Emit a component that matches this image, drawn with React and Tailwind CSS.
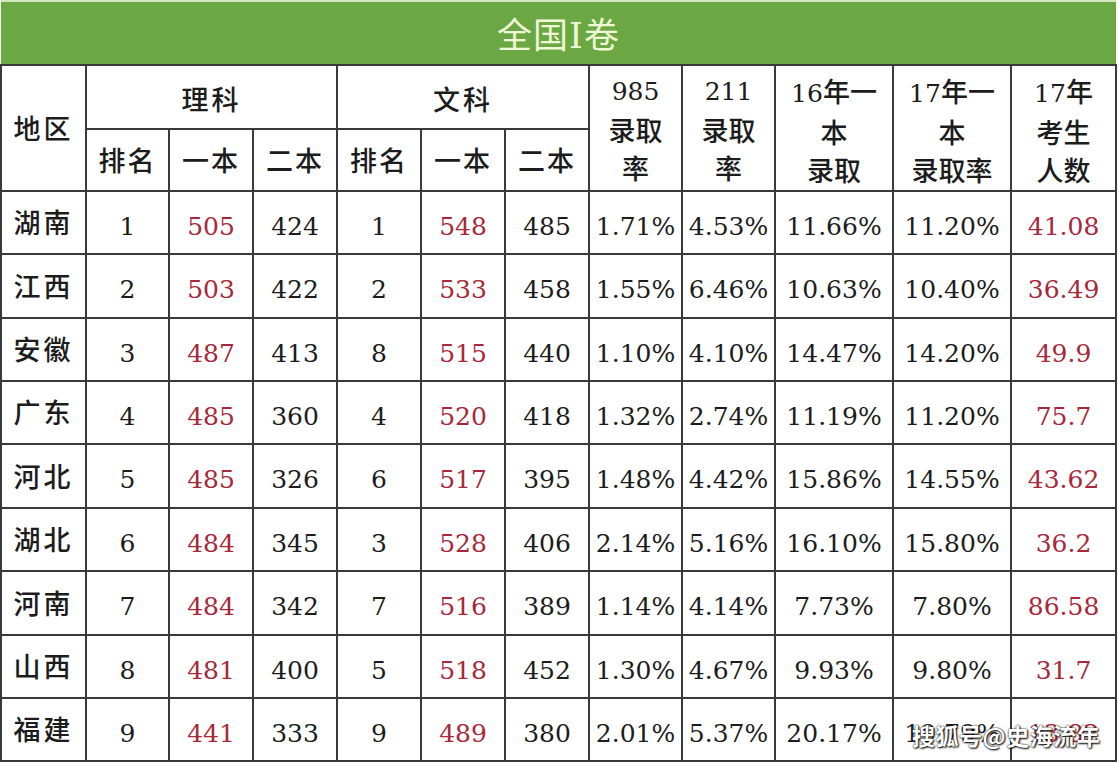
const rows = [
  ['湖南', '1', '505', '424', '1', '548', '485', '1.71%', '4.53%', '11.66%', '11.20%', '41.08', 'h-[63px]'],
  ['江西', '2', '503', '422', '2', '533', '458', '1.55%', '6.46%', '10.63%', '10.40%', '36.49', 'h-[64px]'],
  ['安徽', '3', '487', '413', '8', '515', '440', '1.10%', '4.10%', '14.47%', '14.20%', '49.9', 'h-[63px]'],
  ['广东', '4', '485', '360', '4', '520', '418', '1.32%', '2.74%', '11.19%', '11.20%', '75.7', 'h-[63px]'],
  ['河北', '5', '485', '326', '6', '517', '395', '1.48%', '4.42%', '15.86%', '14.55%', '43.62', 'h-[64px]'],
  ['湖北', '6', '484', '345', '3', '528', '406', '2.14%', '5.16%', '16.10%', '15.80%', '36.2', 'h-[63px]'],
  ['河南', '7', '484', '342', '7', '516', '389', '1.14%', '4.14%', '7.73%', '7.80%', '86.58', 'h-[64px]'],
  ['山西', '8', '481', '400', '5', '518', '452', '1.30%', '4.67%', '9.93%', '9.80%', '31.7', 'h-[63px]'],
  ['福建', '9', '441', '333', '9', '489', '380', '2.01%', '5.37%', '20.17%', '19.79%', '13.82', 'h-[63px]'],
];

const redCols = [2, 5, 11];

const cell = 'border-2 border-[#3a3a3a]';
const cjk = "font-['Noto_Sans_CJK_SC',sans-serif]";
const num = "font-['DejaVu_Serif','Liberation_Serif',serif]";

function HeadCell({ lines }) {
  return (
    <th rowSpan={2} className={`${cell} font-medium leading-[38px] pt-1`}>
      {lines}
    </th>
  );
}

function App() {
  return (
    <div className="relative w-[1118px] h-[762px] overflow-hidden bg-white">
      <table className="table-fixed border-collapse w-[1115px] text-[#1c1c1c]">
        <colgroup>
          <col className="w-[85px]" />
          <col className="w-[83px]" />
          <col className="w-[84px]" />
          <col className="w-[84px]" />
          <col className="w-[84px]" />
          <col className="w-[84px]" />
          <col className="w-[84px]" />
          <col className="w-[93px]" />
          <col className="w-[93px]" />
          <col className="w-[118px]" />
          <col className="w-[118px]" />
          <col className="w-[105px]" />
        </colgroup>
        <thead>
          <tr className="h-[64px]">
            <th
              colSpan={12}
              className={`bg-[#6ba843] border-t-2 border-t-[#d4eabc] border-b-2 border-b-[#3a3a3a] pt-1 text-[35px] font-normal text-[#eef7d6] tracking-[1px] ${cjk}`}
            >
              全国<span className={num}>I</span>卷
            </th>
          </tr>
          <tr className={`h-[64px] text-[27px] ${cjk}`}>
            <th rowSpan={2} className={`${cell} font-medium tracking-[3px]`}>地区</th>
            <th colSpan={3} className={`${cell} font-medium tracking-[3px] pt-1`}>理科</th>
            <th colSpan={3} className={`${cell} font-medium tracking-[3px] pt-1`}>文科</th>
            <HeadCell
              lines={
                <>
                  <div className={`${num} text-[25px]`}>985</div>
                  <div>录取</div>
                  <div>率</div>
                </>
              }
            />
            <HeadCell
              lines={
                <>
                  <div className={`${num} text-[25px]`}>211</div>
                  <div>录取</div>
                  <div>率</div>
                </>
              }
            />
            <HeadCell
              lines={
                <>
                  <div><span className={`${num} text-[25px]`}>16</span>年一</div>
                  <div>本</div>
                  <div>录取</div>
                </>
              }
            />
            <HeadCell
              lines={
                <>
                  <div><span className={`${num} text-[25px]`}>17</span>年一</div>
                  <div>本</div>
                  <div>录取率</div>
                </>
              }
            />
            <HeadCell
              lines={
                <>
                  <div><span className={`${num} text-[25px]`}>17</span>年</div>
                  <div>考生</div>
                  <div>人数</div>
                </>
              }
            />
          </tr>
          <tr className={`h-[62px] text-[27px] ${cjk}`}>
            {['排名', '一本', '二本', '排名', '一本', '二本'].map((t, i) => (
              <th key={i} className={`${cell} font-medium tracking-[2px]`}>{t}</th>
            ))}
          </tr>
        </thead>
        <tbody>
          {rows.map((r) => (
            <tr key={r[0]} className={r[12]}>
              <td className={`${cell} text-center text-[27px] font-medium tracking-[3px] ${cjk}`}>
                {r[0]}
              </td>
              {r.slice(1, 12).map((v, i) => (
                <td
                  key={i}
                  className={`${cell} ${num} text-center text-[25px] whitespace-nowrap pt-2 ${
                    redCols.includes(i + 1) ? 'text-[#a8283a]' : ''
                  }`}
                >
                  {v}
                </td>
              ))}
            </tr>
          ))}
        </tbody>
      </table>
      {/* watermark */}
      <div
        className={`absolute left-[912px] top-[718px] text-[23px] font-bold text-white tracking-[0.5px] [text-shadow:0_0_2px_#000,1px_1px_2px_#000] ${cjk}`}
      >
        搜狐号@史海流年
      </div>
    </div>
  );
}

export default App;
